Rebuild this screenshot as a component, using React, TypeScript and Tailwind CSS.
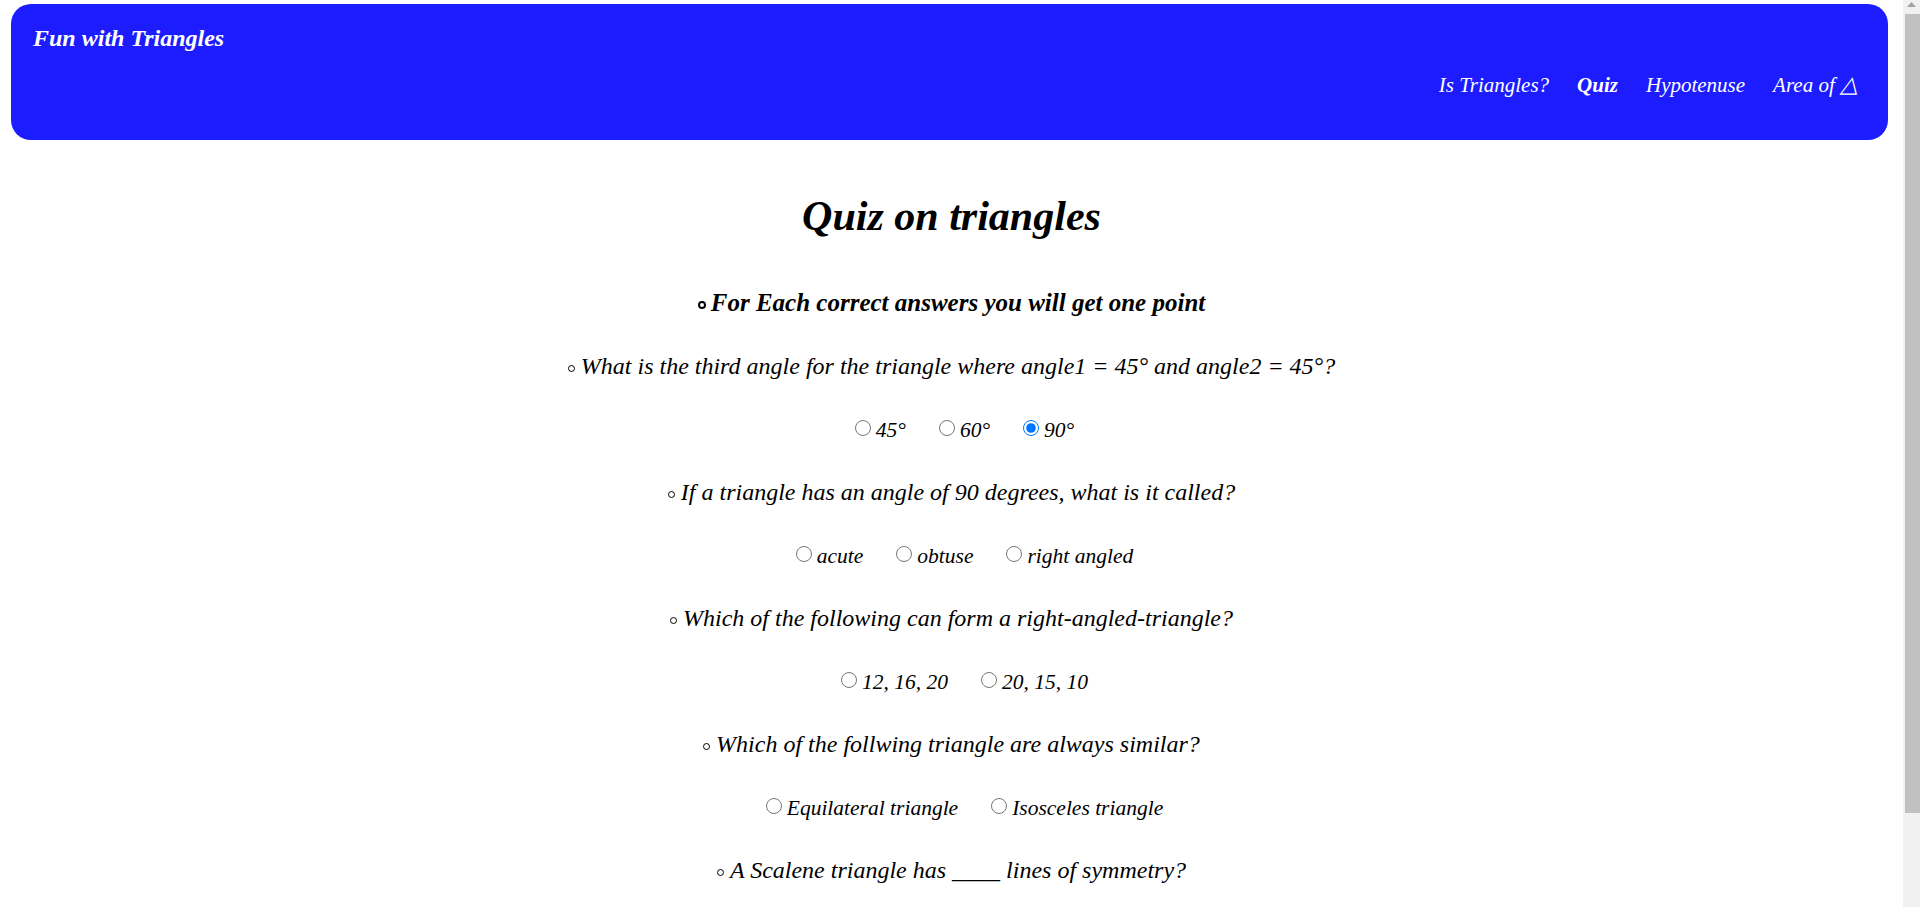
import React, { useState } from "react";

const serif = { fontFamily: '"Liberation Serif", "Times New Roman", serif' };

interface Question {
  name: string;
  text: string;
  options: string[];
}

const questions: Question[] = [
  {
    name: "q1",
    text: "What is the third angle for the triangle where angle1 = 45° and angle2 = 45°?",
    options: ["45°", "60°", "90°"],
  },
  {
    name: "q2",
    text: "If a triangle has an angle of 90 degrees, what is it called?",
    options: ["acute", "obtuse", "right angled"],
  },
  {
    name: "q3",
    text: "Which of the following can form a right-angled-triangle?",
    options: ["12, 16, 20", "20, 15, 10"],
  },
  {
    name: "q4",
    text: "Which of the follwing triangle are always similar?",
    options: ["Equilateral triangle", "Isosceles triangle"],
  },
  {
    name: "q5",
    text: "A Scalene triangle has ____ lines of symmetry?",
    options: [],
  },
];

function Bullet({ bold }: { bold?: boolean }) {
  return (
    <span
      className={
        bold
          ? "inline-block w-[8px] h-[8px] rounded-full border-2 border-black mr-[5px] align-middle"
          : "inline-block w-[7px] h-[7px] rounded-full border-[1.5px] border-black mr-[6px] align-middle"
      }
    />
  );
}

function QuizItem({
  q,
  picked,
  onPick,
}: {
  q: Question;
  picked: string | undefined;
  onPick: (v: string) => void;
}) {
  return (
    <li>
      <p className="text-[24px] leading-[28px]">
        <Bullet />
        {q.text}
      </p>
      {q.options.length > 0 && (
        <div className="flex justify-center gap-[27px] pl-[20px] mt-[38px] mb-[36px] text-[21.5px] leading-[24px]">
          {q.options.map((opt) => (
            <label key={opt} className="flex items-center cursor-pointer">
              <input
                type="radio"
                name={q.name}
                value={opt}
                checked={picked === opt}
                onChange={() => onPick(opt)}
                className="w-[16px] h-[16px] mr-[5px] ml-[6px] mb-[4px] accent-[#0075ff]"
              />
              {opt}
            </label>
          ))}
        </div>
      )}
    </li>
  );
}

// looks like the browser's own scrollbar in the screenshot
function ScrollTrack() {
  return (
    <div className="w-[17px] h-screen shrink-0 bg-[#f1f1f1] flex flex-col">
      <div className="h-[14px] flex justify-center items-start pt-[2px]">
        <svg width="9" height="5" viewBox="0 0 9 5">
          <path d="M0 5 L4.5 0 L9 5 Z" fill="#a3a3a3" />
        </svg>
      </div>
      <div className="h-[799px] ml-[2px] bg-[#c1c1c1]" />
    </div>
  );
}

export default function App() {
  const [answers, setAnswers] = useState<Record<string, string>>({ q1: "90°" });

  return (
    <div className="flex h-screen overflow-hidden bg-white">
      <div className="flex-1 min-w-0 italic text-black" style={serif}>
        <nav className="ml-[11px] mr-[15px] mt-[4px] h-[136px] rounded-[20px] bg-[#1c1cff] text-white pl-[22px] pr-[30px] pt-[20px]">
          <div className="text-[24px] font-bold leading-[28px]">Fun with Triangles</div>
          <ul className="flex justify-end gap-[28px] mt-[20px] text-[21px] leading-[26px]">
            <li>Is Triangles?</li>
            <li className="font-bold">Quiz</li>
            <li>Hypotenuse</li>
            <li>
              Area of <span className="text-[23px]">△</span>
            </li>
          </ul>
        </nav>

        <main className="text-center">
          <h1 className="text-[42px] font-bold leading-[48px] mt-[52px] mb-[48px]">Quiz on triangles</h1>
          <ul>
            <li className="font-bold text-[25px] leading-[30px] mb-[34px]">
              <Bullet bold />
              For Each correct answers you will get one point
            </li>
            {questions.map((q) => (
              <QuizItem
                key={q.name}
                q={q}
                picked={answers[q.name]}
                onPick={(v) => setAnswers({ ...answers, [q.name]: v })}
              />
            ))}
          </ul>
        </main>
      </div>
      <ScrollTrack />
    </div>
  );
}
